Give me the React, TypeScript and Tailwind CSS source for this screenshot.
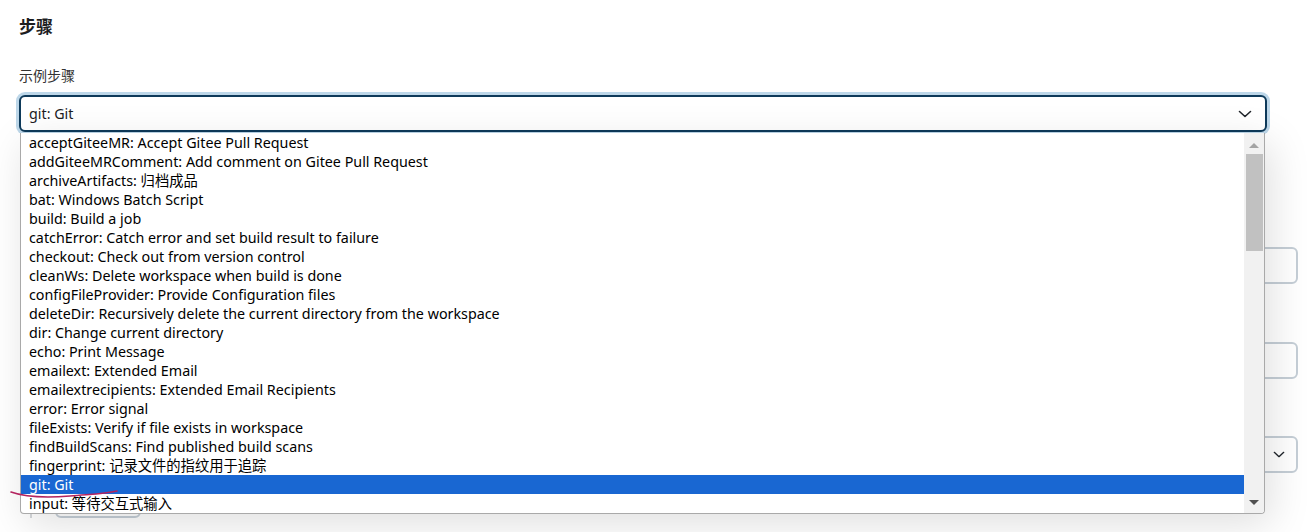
const steps = [
  "acceptGiteeMR: Accept Gitee Pull Request",
  "addGiteeMRComment: Add comment on Gitee Pull Request",
  "archiveArtifacts: 归档成品",
  "bat: Windows Batch Script",
  "build: Build a job",
  "catchError: Catch error and set build result to failure",
  "checkout: Check out from version control",
  "cleanWs: Delete workspace when build is done",
  "configFileProvider: Provide Configuration files",
  "deleteDir: Recursively delete the current directory from the workspace",
  "dir: Change current directory",
  "echo: Print Message",
  "emailext: Extended Email",
  "emailextrecipients: Extended Email Recipients",
  "error: Error signal",
  "fileExists: Verify if file exists in workspace",
  "findBuildScans: Find published build scans",
  "fingerprint: 记录文件的指纹用于追踪",
  "git: Git",
  "input: 等待交互式输入",
];

const font = "font-['Noto_Sans','Noto_Sans_CJK_SC',sans-serif]";

function Chevron({ className }: { className?: string }) {
  return (
    <svg viewBox="0 0 14 8" className={className} fill="none">
      <polyline points="1.5,1.5 7,6.5 12.5,1.5" stroke="#20252b" strokeWidth="1.6" strokeLinecap="round" strokeLinejoin="round" />
    </svg>
  );
}

export default function App() {
  return (
    <div className={`relative h-[532px] w-[1307px] overflow-hidden bg-white text-[#1d1d1f] ${font}`}>
      <div className="px-[19px] pt-[15px]">
        <h2 className="text-[17px] font-bold leading-[24px]">步骤</h2>
        <div className="mt-[27px] text-[14px] leading-[20px] text-[#333]">示例步骤</div>
        <div className="mt-[9px] flex h-[37px] w-[1248px] items-center justify-between rounded-[6px] border-2 border-[#0e3a5a] bg-white pl-[8px] pr-[13px] text-[14.3px] ring-[3px] ring-[#bdd7e9]">
          <span>git: Git</span>
          <Chevron className="h-[8px] w-[14px]" />
        </div>

        {/* form content behind the open list */}
        <div className="ml-[11px] mt-[13px] border-l-2 border-[#d6d9dc] pl-[23px]">
          <div className="h-[102px]" />
          <div className="h-[37px] w-[1243px] rounded-[6px] border-2 border-[#c5ced6]" />
          <div className="h-[58px]" />
          <div className="h-[37px] w-[1243px] rounded-[6px] border-2 border-[#c5ced6]" />
          <div className="h-[57px]" />
          <div className="flex h-[37px] w-[1243px] items-center justify-end rounded-[6px] border-2 border-[#c5ced6] pr-[11px]">
            <Chevron className="h-[7px] w-[12px]" />
          </div>
          <div className="mt-[15px] h-[30px] w-[86px] rounded-[6px] border-2 border-[#c5ced6]" />
        </div>
      </div>

      {/* open dropdown list */}
      <div className="absolute left-[20px] top-[133px] flex h-[381px] w-[1245px] overflow-hidden rounded-b-[4px] border border-t-0 border-[#a9a9a9] bg-white shadow-[6px_10px_40px_rgba(0,0,0,0.13)]">
        <ul className="flex-1 overflow-hidden text-[14.3px] leading-[19px] text-black">
          {steps.map((s) => (
            <li key={s} className={`h-[19px] whitespace-nowrap pl-[8px] ${s === "git: Git" ? "bg-[#1967d2] text-white" : ""}`}>
              {s}
            </li>
          ))}
        </ul>
        <div className="flex w-[20px] flex-col items-center bg-[#f1f1f1]">
          <div className="mt-[10px] h-0 w-0 border-x-[5px] border-b-[5px] border-x-transparent border-b-[#a3a3a3]" />
          <div className="mt-[6px] h-[97px] w-[17px] bg-[#c1c1c1]" />
          <div className="flex-1" />
          <div className="mb-[8px] h-0 w-0 border-x-[5px] border-t-[5px] border-x-transparent border-t-[#505050]" />
        </div>
      </div>

      {/* hand-drawn mark */}
      <svg className="pointer-events-none absolute left-0 top-0" width="1307" height="532">
        <path d="M11 492 C 25 497, 45 498, 70 496 S 105 494, 117 491" fill="none" stroke="#b3245f" strokeWidth="1.6" strokeLinecap="round" />
      </svg>
    </div>
  );
}
